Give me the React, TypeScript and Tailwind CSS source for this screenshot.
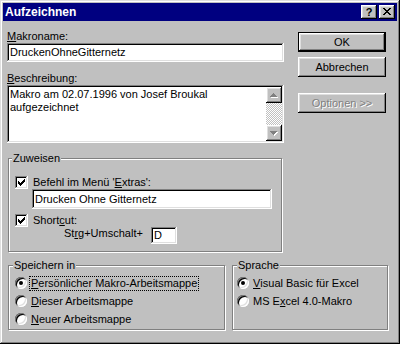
import type { ReactNode } from 'react';

const raised =
  'shadow-[inset_-1px_-1px_0_#000,inset_1px_1px_0_#fff,inset_-2px_-2px_0_#808080,inset_2px_2px_0_#dfdfdf]';
const sunken =
  'shadow-[inset_-1px_-1px_0_#fff,inset_1px_1px_0_#808080,inset_-2px_-2px_0_#dfdfdf,inset_2px_2px_0_#000]';

function Checkbox() {
  return (
    <div className={`h-[13px] w-[13px] shrink-0 bg-white ${sunken}`}>
      <svg width="13" height="13" shapeRendering="crispEdges">
        <path
          d="M3 5h1v3H3zM4 6h1v3H4zM5 7h1v3H5zM6 6h1v3H6zM7 5h1v3H7zM8 4h1v3H8zM9 3h1v3H9z"
          fill="#000"
        />
      </svg>
    </div>
  );
}

function Radio({ label, checked, focused }: { label: ReactNode; checked?: boolean; focused?: boolean }) {
  return (
    <div className="flex h-[16px] items-center">
      <div className="flex h-[12px] w-[12px] shrink-0 items-center justify-center rounded-full bg-white shadow-[inset_1px_1px_0_#808080,inset_-1px_-1px_0_#fff,inset_2px_2px_0_#000,inset_-2px_-2px_0_#dfdfdf]">
        {checked && <div className="h-[4px] w-[4px] rounded-full bg-black" />}
      </div>
      <span
        className={`ml-[2px] flex h-[15px] items-center border px-[1px] ${
          focused ? 'border-dotted border-black' : 'border-transparent'
        }`}
      >
        {label}
      </span>
    </div>
  );
}

function Group({ title, className, children }: { title: string; className: string; children: ReactNode }) {
  return (
    <div
      className={`relative border border-[#808080] shadow-[inset_1px_1px_0_#fff,1px_1px_0_#fff] ${className}`}
    >
      <span className="absolute top-[-7px] bg-[#c0c0c0] px-[1px] leading-[13px] [left:var(--l)]">{title}</span>
      {children}
    </div>
  );
}

function Button({ children, main, disabled }: { children: ReactNode; main?: boolean; disabled?: boolean }) {
  return (
    <div className={`h-[20px] w-[88px] ${main ? 'border border-black' : ''}`}>
      <div
        className={`flex h-full w-full items-center justify-center ${raised} ${
          disabled ? 'text-[#808080] [text-shadow:1px_1px_0_#fff]' : ''
        }`}
      >
        {children}
      </div>
    </div>
  );
}

function Arrow({ down }: { down?: boolean }) {
  const d = down
    ? 'M4 6h7v1H4zM5 7h5v1H5zM6 8h3v1H6zM7 9h1v1H7z'
    : 'M7 6h1v1H7zM6 7h3v1H6zM5 8h5v1H5zM4 9h7v1H4z';
  return (
    <div className={`h-[16px] w-[16px] bg-[#c0c0c0] ${raised}`}>
      <svg width="16" height="16" shapeRendering="crispEdges">
        <path d={d} fill="#fff" transform="translate(1 1)" />
        <path d={d} fill="#808080" />
      </svg>
    </div>
  );
}

export default function App() {
  return (
    <div className="flex h-[344px] w-[400px] flex-col bg-[#c0c0c0] p-[3px] font-['Liberation_Sans',Arial,sans-serif] text-[11px] leading-[13px] text-black shadow-[inset_-1px_-1px_0_#000,inset_1px_1px_0_#dfdfdf,inset_-2px_-2px_0_#808080,inset_2px_2px_0_#fff]">
      {/* title bar */}
      <div className="flex h-[18px] shrink-0 items-center bg-[#000080] pl-[2px] pr-[2px]">
        <span className="text-[12px] font-bold leading-[14px] text-white">Aufzeichnen</span>
        <div className="ml-auto flex gap-[2px]">
          <div className={`flex h-[14px] w-[16px] items-center justify-center bg-[#c0c0c0] text-[11px] font-bold leading-[11px] ${raised}`}>
            ?
          </div>
          <div className={`flex h-[14px] w-[16px] items-center justify-center bg-[#c0c0c0] pb-[1px] ${raised}`}>
            <svg width="8" height="7" shapeRendering="crispEdges">
              <path
                d="M0 0h2v1H0zM6 0h2v1H6zM1 1h2v1H1zM5 1h2v1H5zM2 2h4v1H2zM3 3h2v1H3zM2 4h4v1H2zM1 5h2v1H1zM5 5h2v1H5zM0 6h2v1H0zM6 6h2v1H6z"
                fill="#000"
              />
            </svg>
          </div>
        </div>
      </div>

      <div className="flex flex-col pl-[4px] pt-[9px]">
        <div className="flex">
          <div className="flex w-[277px] flex-col">
            <div className="h-[13px]">
              <span className="underline">M</span>akroname:
            </div>
            <div className={`flex h-[19px] items-center bg-white pl-[3px] ${sunken}`}>DruckenOhneGitternetz</div>

            <div className="mt-[10px] h-[13px]">
              <span className="underline">B</span>eschreibung:
            </div>
            <div className={`flex h-[58px] bg-white p-[2px] ${sunken}`}>
              <div className="flex-1 pl-[1px] pt-[1px]">
                Makro am 02.07.1996 von Josef Broukal
                <br />
                aufgezeichnet
              </div>
              <div className="flex w-[16px] flex-col">
                <Arrow />
                <div className="flex-1 bg-[image:repeating-conic-gradient(#fff_0%_25%,#c0c0c0_0%_50%)] bg-[length:2px_2px]" />
                <Arrow down />
              </div>
            </div>

            <Group title="Zuweisen" className="ml-[1px] mt-[15px] h-[94px] w-[274px] [--l:3px]">
              <div className="flex flex-col pl-[6px] pt-[17px]">
                <div className="flex h-[13px] items-center gap-[5px]">
                  <Checkbox />
                  <span>
                    Befehl im Menü '<span className="underline">E</span>xtras':
                  </span>
                </div>
                <div className={`ml-[17px] flex h-[20px] w-[240px] items-center bg-white pl-[3px] ${sunken}`}>
                  Drucken Ohne Gitternetz
                </div>
                <div className="mt-[5px] flex h-[13px] items-center gap-[5px]">
                  <Checkbox />
                  <span>
                    Short<span className="underline">c</span>ut:
                  </span>
                </div>
                <div className="ml-[49px] flex h-[17px] items-start">
                  <span>
                    St<span className="underline">r</span>g+Umschalt+
                  </span>
                  <div className={`ml-[8px] flex h-[17px] w-[26px] items-center bg-white pl-[3px] ${sunken}`}>D</div>
                </div>
              </div>
            </Group>
          </div>

          <div className="ml-[14px] mt-[2px] flex flex-col">
            <Button main>OK</Button>
            <div className="mt-[5px]">
              <Button>Abbrechen</Button>
            </div>
            <div className="mt-[16px]">
              <Button disabled>Optionen &gt;&gt;</Button>
            </div>
          </div>
        </div>

        <div className="mt-[13px] flex">
          <Group title="Speichern in" className="ml-[1px] h-[65px] w-[217px] [--l:4px]">
            <div className="flex flex-col gap-[2px] pl-[6px] pt-[9px]">
              <Radio
                checked
                focused
                label={
                  <>
                    <span className="underline">P</span>ersönlicher Makro-Arbeitsmappe
                  </>
                }
              />
              <Radio
                label={
                  <>
                    <span className="underline">D</span>ieser Arbeitsmappe
                  </>
                }
              />
              <Radio
                label={
                  <>
                    <span className="underline">N</span>euer Arbeitsmappe
                  </>
                }
              />
            </div>
          </Group>
          <Group title="Sprache" className="ml-[7px] h-[65px] w-[156px] [--l:4px]">
            <div className="flex flex-col gap-[2px] pl-[4px] pt-[9px]">
              <Radio
                checked
                label={
                  <>
                    <span className="underline">V</span>isual Basic für Excel
                  </>
                }
              />
              <Radio
                label={
                  <>
                    MS E<span className="underline">x</span>cel 4.0-Makro
                  </>
                }
              />
            </div>
          </Group>
        </div>
      </div>
    </div>
  );
}
